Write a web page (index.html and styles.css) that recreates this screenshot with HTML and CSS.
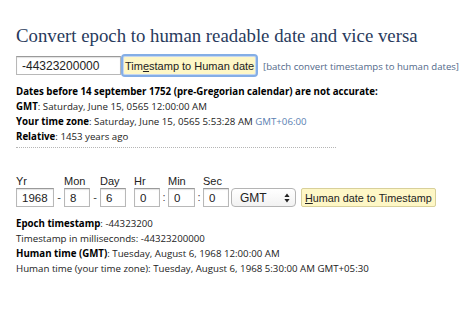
FILE: index.html
```html
<!DOCTYPE html>
<html>
<head>
	<meta charset="utf-8">
	<title>Epoch Converter</title>
	<link rel="stylesheet" href="styles.css">
</head>
<body>
<div class="page">
	<h1 class="title">Convert epoch to human readable date and vice versa</h1>

	<div class="conv-row">
		<input type="text" class="ts-input" value="-44323200000">
		<button class="btn btn-focus">Tim<u>e</u>stamp to Human date</button>
		<a href="#" class="batch">[batch convert timestamps to human dates]</a>
	</div>

	<div class="result">
		<b>Dates before 14 september 1752 (pre-Gregorian calendar) are not accurate:</b><br>
		<b>GMT</b>: Saturday, June 15, 0565 12:00:00 AM<br>
		<b>Your time zone</b>: Saturday, June 15, 0565 5:53:28 AM <span class="tz">GMT+06:00</span><br>
		<b>Relative</b>: 1453 years ago
	</div>
	<div class="dots"></div>

	<div class="date-form">
		<div class="field">
			<label>Yr</label>
			<input type="text" class="num yr" value="1968">
		</div>
		<span class="sep">-</span>
		<div class="field">
			<label>Mon</label>
			<input type="text" class="num" value="8">
		</div>
		<span class="sep">-</span>
		<div class="field">
			<label>Day</label>
			<input type="text" class="num" value="6">
		</div>
		<span class="gap"></span>
		<div class="field">
			<label>Hr</label>
			<input type="text" class="num" value="0">
		</div>
		<span class="sep colon">:</span>
		<div class="field">
			<label>Min</label>
			<input type="text" class="num wide" value="0">
		</div>
		<span class="sep colon">:</span>
		<div class="field">
			<label>Sec</label>
			<input type="text" class="num" value="0">
		</div>
		<div class="field">
			<label>&nbsp;</label>
			<div class="tz-select">
				<span>GMT</span>
				<svg width="6" height="10" viewBox="0 0 6 10"><path d="M3 0.5 L5.6 4 H0.4 Z M3 9.5 L5.6 6 H0.4 Z" fill="#222"/></svg>
			</div>
		</div>
		<div class="field">
			<label>&nbsp;</label>
			<button class="btn"><u>H</u>uman date to Timestamp</button>
		</div>
	</div>

	<div class="result result2">
		<b>Epoch timestamp</b>: -44323200<br>
		Timestamp in milliseconds: -44323200000<br>
		<b>Human time (GMT)</b>: Tuesday, August 6, 1968 12:00:00 AM<br>
		Human time (your time zone): Tuesday, August 6, 1968 5:30:00 AM GMT+05:30
	</div>
</div>
</body>
</html>
```

FILE: styles.css
```css
* {
	margin: 0px;
	padding: 0px;
	box-sizing: border-box;
}

body {
	background: #fff;
	font-family: "Open Sans", sans-serif;
	color: #222;
}

.page {
	padding: 25px 16px 0px 16px;
}

.title {
	font-family: "Liberation Serif", serif;
	font-weight: normal;
	font-size: 18.8px;
	line-height: 22px;
	color: #283a5c;
	white-space: nowrap;
}

.conv-row {
	display: flex;
	align-items: center;
	margin-top: 7px;
	height: 23px;
	white-space: nowrap;
}

input {
	font-family: "Liberation Sans", sans-serif;
	font-size: 12px;
	color: #222;
	border: 1px solid #b8b8b8;
	border-top-color: #9a9a9a;
	box-shadow: inset 0px 1px 1px rgba(0, 0, 0, 0.12);
	outline: none;
	padding: 0px 5px;
	background: #fff;
}

.ts-input {
	width: 105px;
	height: 19px;
}

.btn {
	font-family: "Liberation Sans", sans-serif;
	font-size: 11px;
	color: #222;
	background: #fef7c6;
	border: 1px solid #d8d09a;
	border-radius: 2px;
	height: 19px;
	padding: 0px 4px;
	white-space: nowrap;
	cursor: pointer;
}

.btn-focus {
	height: 23px;
	width: 137px;
	border: 2px solid #84aee6;
	border-radius: 4px;
	box-shadow: inset 0px 0px 0px 1px #c4d6ef;
	padding: 0px 2px;
}

.batch {
	margin-left: 5px;
	font-size: 9.6px;
	color: #52698a;
	text-decoration: none;
	padding-top: 2px;
}

.result {
	margin-top: 7px;
	font-size: 9.7px;
	line-height: 15px;
	color: #222;
	white-space: nowrap;
}

.result b {
	color: #000;
}

.tz {
	color: #5a7fb2;
}

.dots {
	width: 320px;
	margin-top: 3px;
	border-top: 1px dotted #b5b5b5;
}

.date-form {
	display: flex;
	align-items: flex-end;
	margin-top: 27px;
}

.field {
	display: flex;
	flex-direction: column;
}

.field label {
	font-family: "Liberation Sans", sans-serif;
	font-size: 11px;
	line-height: 13px;
	color: #222;
}

.num {
	width: 26px;
	height: 19px;
	font-size: 11.5px;
}

.num.yr {
	width: 38px;
}

.num.wide {
	width: 27px;
}

.sep {
	width: 10px;
	text-align: center;
	font-family: "Liberation Sans", sans-serif;
	font-size: 11px;
	line-height: 19px;
	color: #444;
}

.sep.colon {
	width: 8px;
}

.gap {
	width: 8px;
}

.tz-select {
	margin-left: 2px;
	width: 65px;
	height: 19px;
	border: 1px solid #b4b4b4;
	border-radius: 4px;
	background: linear-gradient(#fff, #f2f2f2);
	display: flex;
	align-items: center;
	justify-content: space-between;
	padding: 0px 5px 0px 8px;
	font-family: "Liberation Sans", sans-serif;
	font-size: 12px;
}

.date-form .btn {
	margin-left: 5px;
	padding: 0px 3px;
	font-size: 10.8px;
}

.result2 {
	margin-top: 9px;
}
```
